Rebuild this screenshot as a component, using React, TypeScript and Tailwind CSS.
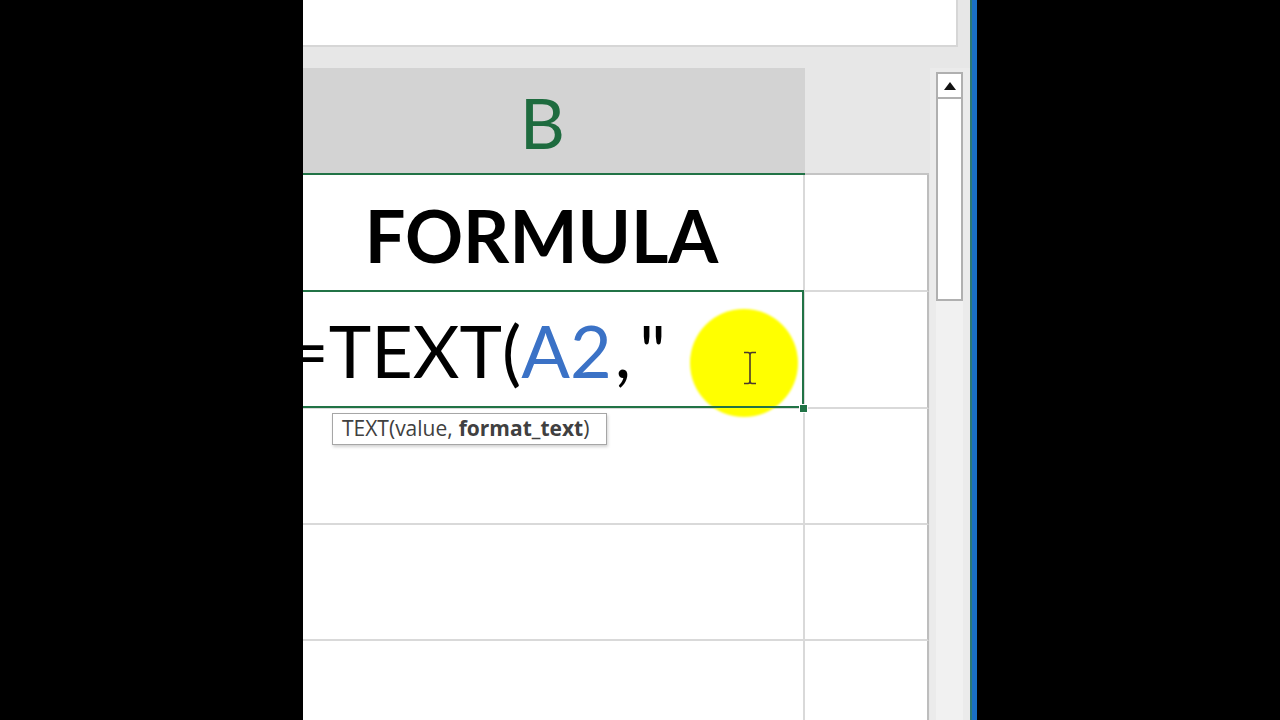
import React from "react";

function Row({ children, h = "h-[116px]" }: { children?: React.ReactNode; h?: string }) {
  return (
    <div className={`flex shrink-0 ${h}`}>
      <div className="relative w-[525px] h-full bg-white border-r-2 border-b-2 border-[#d9d9d9] flex items-center">
        {children}
      </div>
      <div className="w-[124px] h-full bg-white border-b-2 border-b-[#d9d9d9] border-r-2 border-r-[#bdbdbd]" />
    </div>
  );
}

export default function App() {
  return (
    <div className="w-[1280px] h-[720px] bg-black flex overflow-hidden font-['Lato',sans-serif]">
      <div className="w-[303px] shrink-0" />
      <div className="w-[667px] shrink-0 h-full bg-[#e7e7e7] flex flex-col overflow-hidden">
        <div className="h-[47px] shrink-0 flex">
          <div className="w-[655px] h-full bg-white border-r-2 border-b-2 border-[#d6d6d6]" />
        </div>
        <div className="h-[21px] shrink-0" />
        <div className="flex flex-1 min-h-0">
          <div className="w-[650px] shrink-0 ml-[-23px] flex flex-col">
            <div className="flex h-[105px] shrink-0">
              <div className="w-[525px] h-full bg-[#d3d3d3] flex items-center justify-center">
                <span className="text-[#1e6b3f] text-[70px] leading-none pt-[2px] font-normal">B</span>
              </div>
            </div>
            <div className="flex h-[2px] shrink-0">
              <div className="w-[525px] h-full bg-[#217346]" />
              <div className="w-[124px] h-full bg-[#c4c4c4]" />
            </div>
            <Row h="h-[117px]">
              <div className="w-full text-center text-[72px] font-bold text-black leading-none pt-[4px]">FORMULA</div>
            </Row>
            <Row h="h-[117px]">
              <div className="pl-[7px] text-[72px] leading-none text-black whitespace-nowrap">
                =TEXT(<span className="text-[#3b72c6]">A2</span><span className="ml-[3px]">,</span><span className="ml-[8px]">&quot;</span>
              </div>
              <div className="absolute left-[410px] top-[17px] w-[108px] h-[108px] rounded-full bg-[#ffff00] blur-[1px] z-10" />
              <div className="absolute -top-[2px] -left-[2px] -right-[1px] -bottom-[1px] border-2 border-[#217346] z-20" />
              <div className="absolute -right-[5px] -bottom-[6px] w-[9px] h-[9px] bg-[#217346] border border-white z-20" />
              <svg className="absolute left-[463px] top-[59px] z-30" width="14" height="34" viewBox="0 0 14 34">
                <path d="M1 1.5 H5 Q7 1.5 7 4 V30 Q7 32.5 9 32.5 H13 M13 1.5 H9 Q7 1.5 7 4 M7 30 Q7 32.5 5 32.5 H1" fill="none" stroke="#4a3a2c" strokeWidth="1.6" />
              </svg>
              <div className="absolute left-[52px] top-[121px] w-[275px] h-[32px] bg-white border border-[#a6a6a6] shadow-[1px_2px_3px_rgba(0,0,0,0.18)] z-30 flex items-center px-[9px] font-['Open_Sans',sans-serif] text-[21px] text-[#404040] whitespace-nowrap">
                TEXT(value, <span className="font-bold ml-[6px]">format_text</span>)
              </div>
            </Row>
            <Row />
            <Row />
            <Row />
          </div>
          <div className="w-[40px] shrink-0 flex flex-col pt-[4px] pl-[6px] pr-[7px] bg-[#ebebeb]">
            <div className="h-[27px] bg-white border-2 border-[#b0b0b0] flex items-center justify-center shrink-0">
              <svg width="12" height="8" viewBox="0 0 12 8">
                <path d="M6 0 L12 8 H0 Z" fill="#111" />
              </svg>
            </div>
            <div className="h-[202px] bg-white border-2 border-t-0 border-[#b0b0b0] shrink-0" />
            <div className="flex-1 bg-[#f1f1f1]" />
          </div>
        </div>
      </div>
      <div className="w-[7px] shrink-0 h-full bg-[#1a6fc4] border-l-2 border-[#2b7a78]" />
      <div className="flex-1 bg-black" />
    </div>
  );
}
